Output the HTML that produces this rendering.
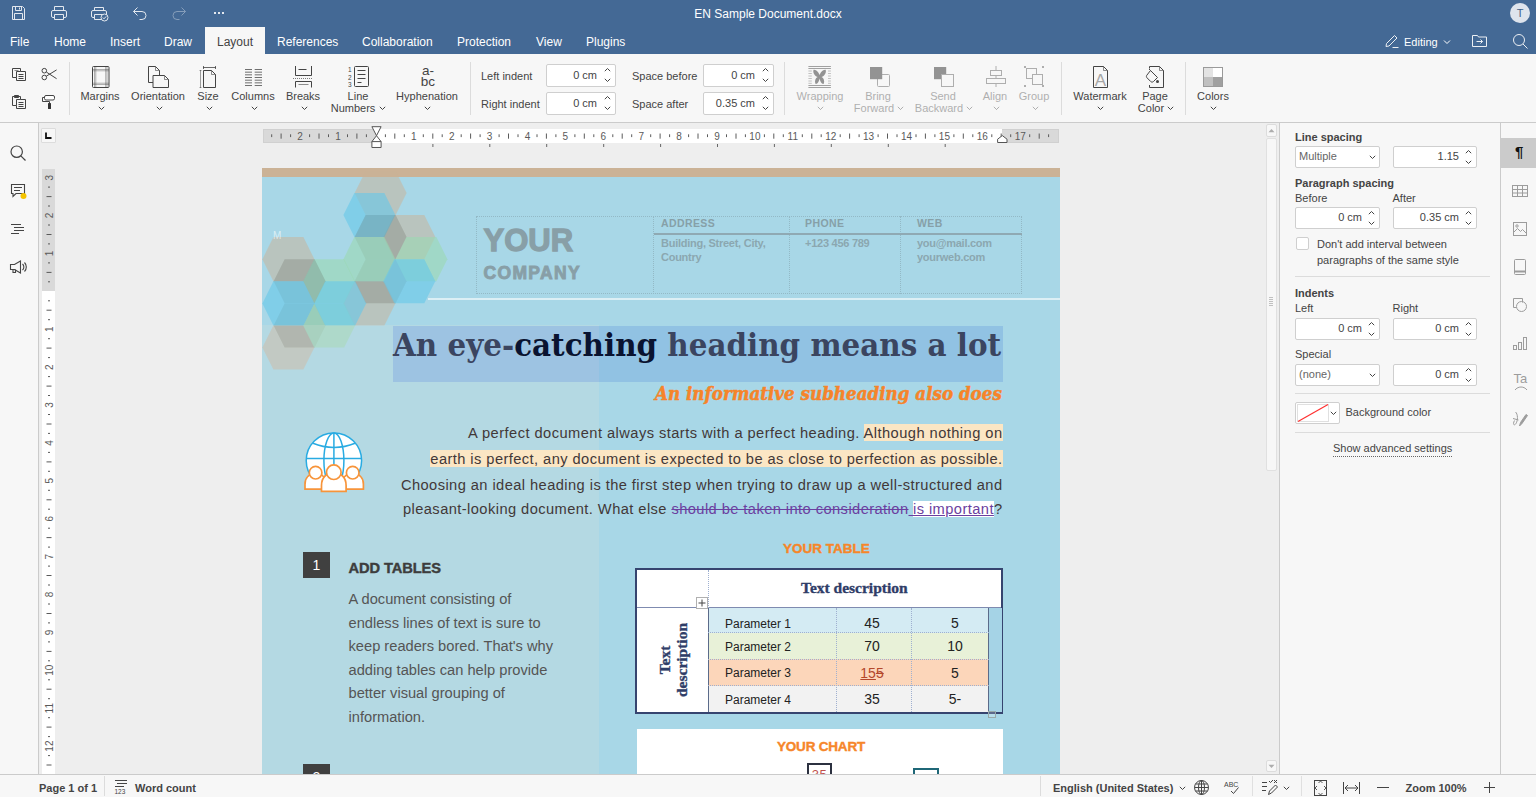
<!DOCTYPE html>
<html lang="en">
<head>
<meta charset="utf-8">
<title>EN Sample Document.docx</title>
<style>
*{box-sizing:border-box;margin:0;padding:0}
html,body{width:1536px;height:797px;overflow:hidden;background:#eee}
body{position:relative;font-family:"Liberation Sans",Arial,sans-serif;font-size:11px;color:#444}
.abs{position:absolute}
svg{position:absolute;overflow:visible}
.t{position:absolute;white-space:nowrap;line-height:1}
/* header */
#hdr{position:absolute;left:0;top:0;width:1536px;height:54.600px;background:#446995}
#hdr .tab{position:absolute;top:35px;color:#fff;font-size:12px;line-height:14px;white-space:nowrap}
#tabact{position:absolute;left:205px;top:27px;width:60px;height:28px;background:#f7f7f7}
/* toolbar */
#tb{position:absolute;left:0;top:54px;width:1536px;height:69px;background:#f7f7f7;border-bottom:1px solid #cbcbcb}
.lbl{position:absolute;font-size:11px;line-height:12px;text-align:center;white-space:nowrap;color:#444;transform:translateX(-50%)}
.dis{opacity:.4}
.sep{position:absolute;width:1px;background:#dcdcdc;top:66px;height:54px}
.inp{position:absolute;height:22px;background:#fff;border:1px solid #cfcfcf;border-radius:2px;font-size:11px;line-height:20px;color:#444;text-align:right}
/* panels */
#left{position:absolute;left:0;top:123px;width:39px;height:651px;background:#f7f7f7;border-right:1px solid #cbcbcb}
#doc{position:absolute;left:39px;top:123px;width:1226px;height:651px;background:#eee;overflow:hidden}
#vsb{position:absolute;left:1265px;top:123px;width:14px;height:651px;background:#eee}
#rp{position:absolute;left:1279px;top:123px;width:221px;height:651px;background:#f7f7f7;border-left:1px solid #cbcbcb}
#rt{position:absolute;left:1500px;top:123px;width:36px;height:651px;background:#f7f7f7;border-left:1px solid #cbcbcb}
#sb{position:absolute;left:0;top:774px;width:1536px;height:23px;background:#f7f7f7;border-top:1px solid #cbcbcb}
#page{position:absolute;left:262px;top:168px;width:798px;height:700px;background:#a8d7e7}

#doc .in{position:absolute;left:-39px;top:-123px;width:1536px;height:797px}
.pt{position:absolute;white-space:nowrap;line-height:1}
.arial{font-family:"Liberation Sans",Arial,sans-serif}
.serif{font-family:"Liberation Serif","DejaVu Serif",serif}
.body1{position:absolute;white-space:nowrap;font-size:14.67px;line-height:17px;color:#423838;text-align:right;letter-spacing:.43px}
.body2{position:absolute;white-space:nowrap;font-size:14.67px;line-height:17px;color:#555}
.hl{background:#fbe6c4;padding-top:1px}
.cell{position:absolute;font-size:12px;line-height:14px;color:#222;white-space:nowrap}
.num{position:absolute;font-size:14px;line-height:16px;color:#222;white-space:nowrap;text-align:center;width:40px}
</style>
</head>
<body>
<!--HEADER-->
<div id="hdr">
<div id="tabact"></div>
<!-- save -->
<svg style="left:8px;top:3px" width="20" height="20" viewBox="0 0 20 20" fill="none" stroke="#fff" stroke-width="1" opacity=".85"><path d="M4.5 3.5h10l2 2v11h-12z"/><path d="M7.5 3.5v4h6v-4"/><path d="M11.5 4.5v2"/><path d="M6.5 16.500v-6h8v6"/></svg>
<!-- print -->
<svg style="left:49px;top:3px" width="20" height="20" viewBox="0 0 20 20" fill="none" stroke="#fff" stroke-width="1" opacity=".85"><path d="M5.500 7.500v-4h9v4"/><rect x="2.500" y="7.500" width="15" height="7" rx="1.500"/><path d="M5.500 11.500h9v5h-9z" fill="#446995"/></svg>
<!-- quick print -->
<svg style="left:89px;top:3px" width="22" height="20" viewBox="0 0 22 20" fill="none" stroke="#fff" stroke-width="1" opacity=".85"><path d="M5.500 7.500v-3h9v3"/><rect x="2.500" y="7.500" width="15" height="7" rx="1.500"/><path d="M5.500 11.500h9v5h-9z" fill="#446995"/><circle cx="15.500" cy="14.500" r="3.500" fill="#446995"/><path d="M13.800 14.500l1.200 1.300 2.200-2.400"/></svg>
<!-- undo -->
<svg style="left:130px;top:4px" width="20" height="20" viewBox="0 0 20 20" fill="none" stroke="#fff" stroke-width="1" opacity=".85"><path d="M7.500 3.500l-4 4 4 4"/><path d="M3.500 7.500h8.500a4 4 0 0 1 0 8h-2.500"/></svg>
<!-- redo -->
<svg style="left:169px;top:4px" width="20" height="20" viewBox="0 0 20 20" fill="none" stroke="#fff" stroke-width="1" opacity=".35"><path d="M12.500 3.500l4 4-4 4"/><path d="M16.500 7.500h-8.500a4 4 0 0 0 0 8h2.500"/></svg>
<!-- more -->
<svg style="left:213px;top:11px" width="12" height="4" viewBox="0 0 12 4" fill="#fff" opacity=".85"><rect x="1" y="1" width="2" height="2"/><rect x="5" y="1" width="2" height="2"/><rect x="9" y="1" width="2" height="2"/></svg>
<div class="t" style="left:0;width:1536px;text-align:center;top:8px;font-size:12px;color:#fff">EN Sample Document.docx</div>
<div class="abs" style="left:1510px;top:3px;width:20px;height:20px;border-radius:10px;background:#dee4ed;color:#3d5f89;font-size:11px;font-weight:normal;text-align:center;line-height:20px">T</div>
<div class="tab" style="left:10px">File</div>
<div class="tab" style="left:54px">Home</div>
<div class="tab" style="left:110px">Insert</div>
<div class="tab" style="left:164px">Draw</div>
<div class="tab" style="left:217px;color:#444">Layout</div>
<div class="tab" style="left:277px">References</div>
<div class="tab" style="left:362px">Collaboration</div>
<div class="tab" style="left:457px">Protection</div>
<div class="tab" style="left:536px">View</div>
<div class="tab" style="left:586px">Plugins</div>
<!-- editing -->
<svg style="left:1383px;top:32px" width="18" height="18" viewBox="0 0 18 18" fill="none" stroke="#fff" stroke-width="1" opacity=".9"><path d="M3.500 11.500l8-8 2.500 2.500-8 8-3 .5z"/><path d="M9.500 15.500h6"/></svg>
<div class="tab" style="left:1404px;font-size:11px">Editing</div>
<svg style="left:1443px;top:39px" width="8" height="6" viewBox="0 0 8 6" fill="none" stroke="#fff" stroke-width="1"><path d="M1 1.500l3 3 3-3"/></svg>
<svg style="left:1471px;top:32px" width="18" height="18" viewBox="0 0 18 18" fill="none" stroke="#fff" stroke-width="1" opacity=".9"><path d="M1.500 3.500h5l1 1.500h8v9.500h-14z"/><path d="M5.500 9.500h6M9.500 7.500l2 2-2 2"/></svg>
<svg style="left:1511px;top:32px" width="18" height="18" viewBox="0 0 18 18" fill="none" stroke="#fff" stroke-width="1" opacity=".9"><circle cx="8" cy="8" r="5.500"/><path d="M12 12l4.500 4.500"/></svg>
</div>
<!--TOOLBAR-->
<div id="tb"></div>
<div id="tbc">
<!-- copy -->
<svg style="left:9px;top:64px" width="20" height="20" viewBox="0 0 20 20" fill="none" stroke="#444" stroke-width="1"><path d="M3.500 4.500h8v3h5v9h-9v-3h-4z" fill="#f7f7f7"/><path d="M7.500 13.500v-6h4"/><path d="M9.500 10.500h5M9.500 12.500h5M9.500 14.500h5"/><path d="M5.500 6.500h4" opacity=".6"/></svg>
<!-- cut -->
<svg style="left:39px;top:64px" width="20" height="20" viewBox="0 0 20 20" fill="none" stroke="#444" stroke-width="1"><circle cx="5.300" cy="6.700" r="2.300"/><circle cx="5.300" cy="13.500" r="2.300"/><path d="M7.300 8l10.300 6.700M7.300 12.200l10.300-6.300"/></svg>
<!-- paste -->
<svg style="left:9px;top:92px" width="20" height="20" viewBox="0 0 20 20" fill="none" stroke="#444" stroke-width="1"><path d="M3.500 4.500h8v3h5v9h-9v-3h-4z" fill="#f7f7f7"/><path d="M7.500 13.500v-6h4"/><path d="M9.500 10.500h5M9.500 12.500h5M9.500 14.500h5"/><path d="M5.500 3.500h4v2h-4z" fill="#444"/></svg>
<!-- format painter -->
<svg style="left:39px;top:92px" width="20" height="20" viewBox="0 0 20 20" fill="none" stroke="#444" stroke-width="1"><rect x="5.500" y="3.500" width="10" height="4.500" rx="1.500" fill="#fff"/><path d="M5.500 5.500h-2v4h7v2"/><rect x="9" y="11" width="3" height="6" rx=".5" fill="#333" stroke="none"/></svg>
<div class="sep" style="left:69px;top:62px;height:53px"></div>
<!-- margins -->
<svg style="left:90px;top:64px" width="22" height="26" viewBox="0 0 22 26" fill="none" stroke="#444" stroke-width="1"><rect x="2.500" y="2.500" width="16.500" height="21" rx="1"/><path d="M4.500 2.500v21M17 2.500v21M2.500 5.500h16.500M2.500 20.500h16.500M5.800 2.500v21M15.700 2.500v21M2.500 6.800h16.500M2.500 19.200h16.500" opacity=".4"/></svg>
<div class="lbl" style="left:100px;top:90px">Margins</div>
<svg style="left:97.5px;top:106px" width="7" height="5" viewBox="0 0 7 5" fill="none" stroke="#444" stroke-width="1" ><path d="M.8 .8l2.700 2.700 2.700-2.700"/></svg>
<!-- orientation -->
<svg style="left:146px;top:64px" width="26" height="26" viewBox="0 0 26 26" fill="none" stroke="#444" stroke-width="1"><path d="M2.500 2.500h7l4 4v12h-11z"/><path d="M9.500 2.500v4h4" opacity=".6"/><path d="M7 11.500h11.500l4 4v8h-15.500z" fill="#f7f7f7"/><path d="M18.500 11.500v4h4" opacity=".6"/></svg>
<div class="lbl" style="left:158px;top:90px">Orientation</div>
<svg style="left:155.5px;top:106px" width="7" height="5" viewBox="0 0 7 5" fill="none" stroke="#444" stroke-width="1" ><path d="M.8 .8l2.700 2.700 2.700-2.700"/></svg>
<!-- size -->
<svg style="left:197px;top:64px" width="22" height="26" viewBox="0 0 22 26" fill="none" stroke="#444" stroke-width="1"><path d="M6.500 6.500h8l4 4v13h-12z"/><path d="M14.500 6.500v4h4" opacity=".6"/><path d="M6 3.500h13M6.500 2v3M18.500 2v3" opacity=".8"/><path d="M3.500 6v18M2.500 6.500h2M2.500 23.500h2" opacity=".5"/></svg>
<div class="lbl" style="left:208px;top:90px">Size</div>
<svg style="left:205.5px;top:106px" width="7" height="5" viewBox="0 0 7 5" fill="none" stroke="#444" stroke-width="1" ><path d="M.8 .8l2.700 2.700 2.700-2.700"/></svg>
<!-- columns -->
<svg style="left:243px;top:66px" width="22" height="22" viewBox="0 0 22 22" fill="none" stroke="#444" stroke-width="1"><path d="M2 3.50h7M11.700 3.50h7.300M2 6.17h7M11.700 6.17h7.300M2 8.84h7M11.700 8.84h7.300M2 11.51h7M11.700 11.51h7.300M2 14.18h7M11.700 14.18h7.300M2 16.85h7M11.700 16.85h7.300M2 19.52h7M11.700 19.52h7.300" stroke-width=".9" opacity=".85"/></svg>
<div class="lbl" style="left:253px;top:90px">Columns</div>
<svg style="left:250.5px;top:106px" width="7" height="5" viewBox="0 0 7 5" fill="none" stroke="#444" stroke-width="1" ><path d="M.8 .8l2.700 2.700 2.700-2.700"/></svg>
<!-- breaks -->
<svg style="left:291px;top:64px" width="24" height="26" viewBox="0 0 24 26" fill="none" stroke="#444" stroke-width="1"><path d="M4.500 2v9.500h16v-9.500"/><path d="M7.500 5.500h8"/><path d="M2 14.500h20" stroke-dasharray="1 1" opacity=".7"/><path d="M4.500 23.500v-6h16v6"/><path d="M7.500 20.500h10" opacity=".6"/></svg>
<div class="lbl" style="left:303px;top:90px">Breaks</div>
<svg style="left:300.5px;top:106px" width="7" height="5" viewBox="0 0 7 5" fill="none" stroke="#444" stroke-width="1" ><path d="M.8 .8l2.700 2.700 2.700-2.700"/></svg>
<!-- line numbers -->
<svg style="left:345px;top:64px" width="26" height="26" viewBox="0 0 26 26" fill="none" stroke="#444" stroke-width="1"><rect x="9.500" y="2.500" width="14" height="20" rx="1"/><path d="M12.500 6.500h8M12.500 10.500h8M12.500 14.500h8M12.500 18.500h4"/><text x="3" y="8" font-size="6.500" font-family="Liberation Sans,sans-serif" fill="#444" stroke="none">1</text><text x="3" y="15.500" font-size="6.500" font-family="Liberation Sans,sans-serif" fill="#444" stroke="none">2</text><text x="3" y="23" font-size="6.500" font-family="Liberation Sans,sans-serif" fill="#444" stroke="none">3</text></svg>
<div class="lbl" style="left:358px;top:90px">Line</div>
<div class="lbl" style="left:353px;top:102px">Numbers</div>
<svg style="left:378.5px;top:106.0px" width="7" height="5" viewBox="0 0 7 5" fill="none" stroke="#444" stroke-width="1" ><path d="M.8 .8l2.700 2.700 2.700-2.700"/></svg>
<!-- hyphenation -->
<div class="t" style="left:414px;top:65px;width:28px;text-align:center;font-family:'Liberation Sans',sans-serif;font-size:13.500px;line-height:11px;color:#444;white-space:normal">a-<br>bc</div>
<div class="lbl" style="left:427px;top:90px">Hyphenation</div>
<svg style="left:424px;top:106px" width="7" height="5" viewBox="0 0 7 5" fill="none" stroke="#444" stroke-width="1" ><path d="M.8 .8l2.700 2.700 2.700-2.700"/></svg>
<div class="sep" style="left:470px;top:62px;height:53px"></div>
<div class="t" style="left:481px;top:70.500px;font-size:11px">Left indent</div>
<div class="t" style="left:481px;top:98.500px;font-size:11px">Right indent</div>
<div class="inp" style="left:546px;top:64px;width:70px;height:23px"><span class="t" style="right:18px;top:5px">0 cm</span></div>
<div class="inp" style="left:546px;top:92px;width:70px;height:23px"><span class="t" style="right:18px;top:5px">0 cm</span></div>
<svg style="left:603.5px;top:66.5px" width="7" height="5" viewBox="0 0 7 5" fill="none" stroke="#444" stroke-width="1"><path d="M.8 4.200l2.700-2.700 2.700 2.700"/></svg><svg style="left:603.5px;top:78.0px" width="7" height="5" viewBox="0 0 7 5" fill="none" stroke="#444" stroke-width="1"><path d="M.8 .8l2.700 2.700 2.700-2.700"/></svg><svg style="left:603.5px;top:94.5px" width="7" height="5" viewBox="0 0 7 5" fill="none" stroke="#444" stroke-width="1"><path d="M.8 4.200l2.700-2.700 2.700 2.700"/></svg><svg style="left:603.5px;top:106.0px" width="7" height="5" viewBox="0 0 7 5" fill="none" stroke="#444" stroke-width="1"><path d="M.8 .8l2.700 2.700 2.700-2.700"/></svg>
<div class="t" style="left:632px;top:70.500px;font-size:11px">Space before</div>
<div class="t" style="left:632px;top:98.500px;font-size:11px">Space after</div>
<div class="inp" style="left:703px;top:64px;width:71px;height:23px"><span class="t" style="right:18px;top:5px">0 cm</span></div>
<div class="inp" style="left:703px;top:92px;width:71px;height:23px"><span class="t" style="right:18px;top:5px">0.35 cm</span></div>
<svg style="left:761.5px;top:66.5px" width="7" height="5" viewBox="0 0 7 5" fill="none" stroke="#444" stroke-width="1"><path d="M.8 4.200l2.700-2.700 2.700 2.700"/></svg><svg style="left:761.5px;top:78.0px" width="7" height="5" viewBox="0 0 7 5" fill="none" stroke="#444" stroke-width="1"><path d="M.8 .8l2.700 2.700 2.700-2.700"/></svg><svg style="left:761.5px;top:94.5px" width="7" height="5" viewBox="0 0 7 5" fill="none" stroke="#444" stroke-width="1"><path d="M.8 4.200l2.700-2.700 2.700 2.700"/></svg><svg style="left:761.5px;top:106.0px" width="7" height="5" viewBox="0 0 7 5" fill="none" stroke="#444" stroke-width="1"><path d="M.8 .8l2.700 2.700 2.700-2.700"/></svg>
<div class="sep" style="left:784px;top:62px;height:53px"></div>
<!-- wrapping -->
<svg class="dis" style="left:807px;top:64px" width="26" height="26" viewBox="0 0 26 26" fill="none" stroke="#444" stroke-width="1"><path d="M1.400 2.500h22.500M1.400 4.500h22.500M1.400 21.500h22.500M1.400 23.500h22.500" stroke="#222"/><path d="M1.400 7h3.400M1.400 9.500h3.400M1.400 12h3.400M1.400 14.500h3.400M1.400 17h3.400M1.400 19.300h3.400M21 7h2.900M21 9.500h2.900M21 12h2.900M21 14.500h2.900M21 17h2.900M21 19.300h2.900" opacity=".75"/><path d="M12.600 11C11.800 8.500 9 5.200 6.600 5.800 5.600 8 7.200 12 10.600 13 8.400 14 7.400 17 8.400 19.800 10.200 20.600 12 17.500 12.600 14.500 13.200 17.500 15 20.600 16.800 19.800 17.800 17 16.800 14 14.600 13 18 12 19.600 8 18.600 5.800 16.200 5.200 13.400 8.500 12.600 11z" fill="#000" stroke="none"/></svg>
<div class="lbl dis" style="left:820px;top:90px">Wrapping</div>
<svg style="left:816.5px;top:106.0px" width="7" height="5" viewBox="0 0 7 5" fill="none" stroke="#444" stroke-width="1" class="dis"><path d="M.8 .8l2.700 2.700 2.700-2.700"/></svg>
<!-- bring forward -->
<svg class="dis" style="left:867px;top:64px" width="26" height="26" viewBox="0 0 26 26" fill="none" stroke="#444" stroke-width="1"><rect x="10.500" y="10.500" width="12" height="12" rx="1"/><rect x="3" y="3" width="12.200" height="12.200" fill="#000" stroke="none"/></svg>
<div class="lbl dis" style="left:878px;top:90px">Bring</div>
<div class="lbl dis" style="left:874px;top:102px">Forward</div>
<svg style="left:896.5px;top:106.0px" width="7" height="5" viewBox="0 0 7 5" fill="none" stroke="#444" stroke-width="1" class="dis"><path d="M.8 .8l2.700 2.700 2.700-2.700"/></svg>
<!-- send backward -->
<svg class="dis" style="left:932px;top:64px" width="26" height="26" viewBox="0 0 26 26" fill="none" stroke="#444" stroke-width="1"><rect x="2" y="3" width="12.200" height="12.200" fill="#000" stroke="none"/><rect x="9.500" y="10.500" width="12" height="12" fill="#f7f7f7"/></svg>
<div class="lbl dis" style="left:943px;top:90px">Send</div>
<div class="lbl dis" style="left:939px;top:102px">Backward</div>
<svg style="left:965.5px;top:106.0px" width="7" height="5" viewBox="0 0 7 5" fill="none" stroke="#444" stroke-width="1" class="dis"><path d="M.8 .8l2.700 2.700 2.700-2.700"/></svg>
<!-- align -->
<svg class="dis" style="left:984px;top:64px" width="24" height="26" viewBox="0 0 24 26" fill="none" stroke="#444" stroke-width="1"><path d="M12 2v21"/><rect x="6.500" y="6.500" width="11" height="5" fill="#f7f7f7"/><rect x="2.500" y="14.500" width="19" height="5" fill="#f7f7f7"/></svg>
<div class="lbl dis" style="left:995px;top:90px">Align</div>
<svg style="left:992.5px;top:106.0px" width="7" height="5" viewBox="0 0 7 5" fill="none" stroke="#444" stroke-width="1" class="dis"><path d="M.8 .8l2.700 2.700 2.700-2.700"/></svg>
<!-- group -->
<svg class="dis" style="left:1022px;top:64px" width="24" height="26" viewBox="0 0 24 26" fill="none" stroke="#444" stroke-width="1"><rect x="4.500" y="4.500" width="10" height="10"/><rect x="10.500" y="10.500" width="10" height="10" fill="#f7f7f7"/><path d="M2 2h2v2h-2zM20 2h2v2h-2zM2 21h2v2h-2zM20 21h2v2h-2z" fill="#444" stroke="none"/></svg>
<div class="lbl dis" style="left:1034px;top:90px">Group</div>
<svg style="left:1031.5px;top:106.0px" width="7" height="5" viewBox="0 0 7 5" fill="none" stroke="#444" stroke-width="1" class="dis"><path d="M.8 .8l2.700 2.700 2.700-2.700"/></svg>
<div class="sep" style="left:1061px;top:62px;height:53px"></div>
<!-- watermark -->
<svg style="left:1090px;top:64px" width="22" height="26" viewBox="0 0 22 26" fill="none" stroke="#444" stroke-width="1"><path d="M3.500 2.500h10l4 4v17h-14z"/><path d="M13.500 2.500v4h4" opacity=".6"/><text x="10.500" y="21.500" font-size="17" text-anchor="middle" font-family="Liberation Sans,sans-serif" fill="#444" stroke="none" opacity=".45">A</text></svg>
<div class="lbl" style="left:1100px;top:90px">Watermark</div>
<svg style="left:1097px;top:106px" width="7" height="5" viewBox="0 0 7 5" fill="none" stroke="#444" stroke-width="1" ><path d="M.8 .8l2.700 2.700 2.700-2.700"/></svg>
<!-- page color -->
<svg style="left:1143px;top:64px" width="24" height="26" viewBox="0 0 24 26" fill="none" stroke="#444" stroke-width="1"><path d="M6.500 4.500v-2h10l4 4v17h-14v-2.500"/><path d="M16.500 2.500v4h4" opacity=".6"/><path d="M7.500 6.500l7 7-4 4c-.8.800-2 .8-2.800 0l-3.700-3.700c-.8-.8-.8-2 0-2.800z" fill="#f7f7f7"/><path d="M7.500 6.500l-1.500-1.500"/><circle cx="14.500" cy="17.500" r="1.500" fill="#444" stroke="none"/></svg>
<div class="lbl" style="left:1155px;top:90px">Page</div>
<div class="lbl" style="left:1151px;top:102px">Color</div>
<svg style="left:1166.5px;top:106.0px" width="7" height="5" viewBox="0 0 7 5" fill="none" stroke="#444" stroke-width="1" ><path d="M.8 .8l2.700 2.700 2.700-2.700"/></svg>
<div class="sep" style="left:1185px;top:62px;height:53px"></div>
<!-- colors -->
<svg style="left:1203px;top:67px" width="21" height="21" viewBox="0 0 21 21"><rect x="0" y="0" width="20" height="20" fill="#fff"/><rect x="1" y="1" width="9" height="9" fill="#e3e3e3"/><rect x="10" y="1" width="9" height="9" fill="#fff"/><rect x="1" y="10" width="9" height="9" fill="#c0c0c0"/><rect x="10" y="10" width="9" height="9" fill="#a0a0a0"/><rect x=".5" y=".5" width="19" height="19" fill="none" stroke="#9a9a9a"/></svg>
<div class="lbl" style="left:1213px;top:90px">Colors</div>
<svg style="left:1210px;top:106px" width="7" height="5" viewBox="0 0 7 5" fill="none" stroke="#444" stroke-width="1" ><path d="M.8 .8l2.700 2.700 2.700-2.700"/></svg>
</div>
<!--LEFT-->
<div id="left"></div>
<svg style="left:8px;top:143px" width="20" height="20" viewBox="0 0 20 20" fill="none" stroke="#444" stroke-width="1.200"><circle cx="8.700" cy="8.700" r="5.700"/><path d="M12.800 12.800l4.700 4.700"/></svg>
<svg style="left:8px;top:181px" width="22" height="22" viewBox="0 0 22 22" fill="none" stroke="#444" stroke-width="1.100"><path d="M3.500 3.500h13v9h-8.500l-3 3v-3h-1.500z"/><path d="M6 6.500h8M6 9.500h6"/><circle cx="15.500" cy="15" r="3" fill="#f5c400" stroke="none"/></svg>
<svg style="left:8px;top:219px" width="20" height="20" viewBox="0 0 20 20" fill="none" stroke="#444" stroke-width="1.100"><path d="M3 5.500h10M6 8.500h10M6 11.500h10M3 14.500h8"/></svg>
<svg style="left:7px;top:256px" width="22" height="22" viewBox="0 0 22 22" fill="none" stroke="#444" stroke-width="1.100"><path d="M3.500 8.500h4l6-3.500v12l-6-3.500h-4z"/><path d="M6 13.500v3h2.500v-3"/><path d="M15.500 8a4 4 0 0 1 0 6M17.500 6.500a6.500 6.500 0 0 1 0 9"/></svg>
<!--DOC-->
<div id="doc"><div class="in">
<!--RULERS-->
<div class="abs" style="left:40.500px;top:128px;width:15px;height:15px;background:#f7f7f7;border:1px solid #dcdcdc;border-radius:1px"></div>
<svg style="left:40.500px;top:128px" width="15" height="15" viewBox="0 0 15 15"><path d="M5 4.500v5.500h5.500" fill="none" stroke="#111" stroke-width="1.800"/></svg>
<div class="abs" style="left:262.500px;top:129px;width:796.500px;height:14px;background:#d9d9d9;border:1px solid #d0d0d0"></div>
<div class="abs" style="left:375.9px;top:129px;width:626.4px;height:14px;background:#fff"></div>
<div class="abs" style="left:42px;top:168.500px;width:13px;height:610px;background:#d9d9d9"></div>
<div class="abs" style="left:42px;top:291.3px;width:13px;height:500px;background:#fff"></div>
<svg style="left:0;top:0" width="1536" height="797" viewBox="0 0 1536 797" font-family="Liberation Sans,Arial,sans-serif" font-size="10" fill="#5a5a5a" stroke="none"><text x="300.1" y="139.500" text-anchor="middle">2</text><text x="338.0" y="139.500" text-anchor="middle">1</text><text x="413.8" y="139.500" text-anchor="middle">1</text><text x="451.7" y="139.500" text-anchor="middle">2</text><text x="489.6" y="139.500" text-anchor="middle">3</text><text x="527.5" y="139.500" text-anchor="middle">4</text><text x="565.4" y="139.500" text-anchor="middle">5</text><text x="603.3" y="139.500" text-anchor="middle">6</text><text x="641.2" y="139.500" text-anchor="middle">7</text><text x="679.1" y="139.500" text-anchor="middle">8</text><text x="717.0" y="139.500" text-anchor="middle">9</text><text x="754.9" y="139.500" text-anchor="middle">10</text><text x="792.8" y="139.500" text-anchor="middle">11</text><text x="830.7" y="139.500" text-anchor="middle">12</text><text x="868.6" y="139.500" text-anchor="middle">13</text><text x="906.5" y="139.500" text-anchor="middle">14</text><text x="944.4" y="139.500" text-anchor="middle">15</text><text x="982.3" y="139.500" text-anchor="middle">16</text><text x="1020.2" y="139.500" text-anchor="middle">17</text><path d="M271.7 134.300v2.800M281.1 133.500v5.2M290.6 134.300v2.800M309.6 134.300v2.800M319.0 133.500v5.2M328.5 134.300v2.800M347.5 134.300v2.800M356.9 133.500v5.2M366.4 134.300v2.800M385.4 134.300v2.800M394.8 133.500v5.2M404.3 134.300v2.800M423.3 134.300v2.800M432.8 133.500v5.2M442.2 134.300v2.800M461.2 134.300v2.800M470.6 133.500v5.2M480.1 134.300v2.800M499.1 134.300v2.800M508.5 133.500v5.2M518.0 134.300v2.800M537.0 134.300v2.800M546.4 133.500v5.2M555.9 134.300v2.800M574.9 134.300v2.800M584.3 133.500v5.2M593.8 134.300v2.800M612.8 134.300v2.800M622.2 133.500v5.2M631.7 134.300v2.800M650.7 134.300v2.800M660.1 133.500v5.2M669.6 134.300v2.800M688.6 134.300v2.800M698.0 133.500v5.2M707.5 134.300v2.800M726.5 134.300v2.800M736.0 133.500v5.2M745.4 134.300v2.800M764.4 134.300v2.800M773.8 133.500v5.2M783.3 134.300v2.800M802.3 134.300v2.800M811.8 133.500v5.2M821.2 134.300v2.800M840.2 134.300v2.800M849.6 133.500v5.2M859.1 134.300v2.800M878.1 134.300v2.800M887.5 133.500v5.2M897.0 134.300v2.800M916.0 134.300v2.800M925.4 133.500v5.2M934.9 134.300v2.800M953.9 134.300v2.800M963.3 133.500v5.2M972.8 134.300v2.800M991.8 134.300v2.800M1001.2 133.500v5.2M1010.7 134.300v2.800M1029.7 134.300v2.800M1039.2 133.500v5.2M1048.6 134.300v2.800" stroke="#5a5a5a" stroke-width="1" fill="none"/><path d="M432.9 144v3M489.8 144v3M546.7 144v3M603.7 144v3M660.6 144v3M717.5 144v3M774.4 144v3M831.3 144v3M888.3 144v3M945.2 144v3" stroke="#666" stroke-width="1" fill="none"/><text transform="translate(52.500 177.6) rotate(-90)" text-anchor="middle">3</text><text transform="translate(52.500 215.5) rotate(-90)" text-anchor="middle">2</text><text transform="translate(52.500 253.4) rotate(-90)" text-anchor="middle">1</text><text transform="translate(52.500 329.2) rotate(-90)" text-anchor="middle">1</text><text transform="translate(52.500 367.1) rotate(-90)" text-anchor="middle">2</text><text transform="translate(52.500 405.0) rotate(-90)" text-anchor="middle">3</text><text transform="translate(52.500 442.9) rotate(-90)" text-anchor="middle">4</text><text transform="translate(52.500 480.8) rotate(-90)" text-anchor="middle">5</text><text transform="translate(52.500 518.7) rotate(-90)" text-anchor="middle">6</text><text transform="translate(52.500 556.6) rotate(-90)" text-anchor="middle">7</text><text transform="translate(52.500 594.5) rotate(-90)" text-anchor="middle">8</text><text transform="translate(52.500 632.4) rotate(-90)" text-anchor="middle">9</text><text transform="translate(52.500 670.3) rotate(-90)" text-anchor="middle">10</text><text transform="translate(52.500 708.2) rotate(-90)" text-anchor="middle">11</text><text transform="translate(52.500 746.1) rotate(-90)" text-anchor="middle">12</text><path d="M48 187.1h2M46.500 196.6h5M48 206.0h2M48 225.0h2M46.500 234.5h5M48 243.9h2M48 262.9h2M46.500 272.4h5M48 281.8h2M48 300.8h2M46.500 310.2h5M48 319.7h2M48 338.7h2M46.500 348.1h5M48 357.6h2M48 376.6h2M46.500 386.1h5M48 395.5h2M48 414.5h2M46.500 424.0h5M48 433.4h2M48 452.4h2M46.500 461.9h5M48 471.3h2M48 490.3h2M46.500 499.8h5M48 509.2h2M48 528.2h2M46.500 537.6h5M48 547.1h2M48 566.1h2M46.500 575.5h5M48 585.0h2M48 604.0h2M46.500 613.5h5M48 622.9h2M48 641.9h2M46.500 651.4h5M48 660.8h2M48 679.8h2M46.500 689.2h5M48 698.7h2M48 717.7h2M46.500 727.1h5M48 736.6h2M48 755.6h2M46.500 765.0h5M48 774.5h2" stroke="#5a5a5a" stroke-width="1" fill="none"/><path d="M371.900 126.700h9.200l-4.600 9 4.600 5.900v5.900h-9.200v-5.900l4.600-5.900zM371.900 141.600h9.200" fill="#fff" stroke="#555" stroke-width="1" stroke-linejoin="round"/><path d="M1002.300 135.600l4.700 3.600v3.300h-9.400v-3.300z" fill="#fff" stroke="#555" stroke-width="1" stroke-linejoin="round"/></svg>
<!--/RULERS-->
<!--PAGE-->
<div id="page"></div>
<div class="abs" style="left:262px;top:168px;width:798px;height:9px;background:#cbb296"></div>
<svg style="left:262px;top:177px" width="200" height="200" viewBox="262 177 200 200"><polygon points="354.6,193.0 365.6,170.9 395.6,170.9 406.6,193.0 395.6,215.1 365.6,215.1" fill="rgba(201,177,149,.5)"/><polygon points="383.3,237.1 394.3,215.1 424.3,215.1 435.3,237.1 424.3,259.2 394.3,259.2" fill="rgba(201,177,149,.5)"/><polygon points="262.4,259.2 273.4,237.1 303.4,237.1 314.4,259.2 303.4,281.3 273.4,281.3" fill="rgba(201,177,149,.5)"/><polygon points="343.4,303.4 354.4,281.3 384.4,281.3 395.4,303.4 384.4,325.4 354.4,325.4" fill="rgba(201,177,149,.5)"/><polygon points="262.4,347.5 273.4,325.4 303.4,325.4 314.4,347.5 303.4,369.6 273.4,369.6" fill="rgba(201,177,149,.5)"/><polygon points="343.4,215.1 354.4,193.0 384.4,193.0 395.4,215.1 384.4,237.1 354.4,237.1" fill="rgba(101,200,233,.6)"/><polygon points="303.2,281.3 314.2,259.2 344.2,259.2 355.2,281.3 344.2,303.3 314.2,303.3" fill="rgba(155,217,179,.6)"/><polygon points="354.6,237.1 365.6,215.1 395.6,215.1 406.6,237.1 395.6,259.2 365.6,259.2" fill="rgba(95,95,80,.23)"/><polygon points="273.6,281.3 284.6,259.2 314.6,259.2 325.6,281.3 314.6,303.3 284.6,303.3" fill="rgba(95,95,80,.23)"/><polygon points="273.6,325.4 284.6,303.4 314.6,303.4 325.6,325.4 314.6,347.5 284.6,347.5" fill="rgba(95,95,80,.23)"/><polygon points="354.6,281.3 365.6,259.2 395.6,259.2 406.6,281.3 395.6,303.3 365.6,303.3" fill="rgba(95,95,80,.23)"/><polygon points="343.4,259.2 354.4,237.1 384.4,237.1 395.4,259.2 384.4,281.3 354.4,281.3" fill="rgba(155,217,179,.6)"/><polygon points="395.4,259.2 406.4,237.1 436.4,237.1 447.4,259.2 436.4,281.3 406.4,281.3" fill="rgba(155,217,179,.6)"/><polygon points="303.2,325.4 314.2,303.4 344.2,303.4 355.2,325.4 344.2,347.5 314.2,347.5" fill="rgba(155,217,179,.6)"/><polygon points="383.3,281.3 394.3,259.2 424.3,259.2 435.3,281.3 424.3,303.3 394.3,303.3" fill="rgba(101,200,233,.6)"/><polygon points="262.4,303.4 273.4,281.3 303.4,281.3 314.4,303.4 303.4,325.4 273.4,325.4" fill="rgba(101,200,233,.6)"/><polygon points="314.2,303.4 325.2,281.3 355.2,281.3 366.2,303.4 355.2,325.4 325.2,325.4" fill="rgba(101,200,233,.6)"/></svg>
<div class="pt arial" style="left:273px;top:230.500px;font-size:10px;color:rgba(255,255,255,.6)">M</div>
<div class="abs" style="left:262px;top:325px;width:337px;height:460px;background:rgba(228,225,216,.2)"></div>

<!-- company table -->
<div class="abs" style="left:476px;top:216px;width:546px;height:78px;border:1px dotted #93b9c6"></div>
<div class="abs" style="left:653px;top:216px;width:1px;height:78px;border-left:1px dotted #93b9c6"></div>
<div class="abs" style="left:789px;top:216px;width:1px;height:78px;border-left:1px dotted #93b9c6"></div>
<div class="abs" style="left:900px;top:216px;width:1px;height:78px;border-left:1px dotted #93b9c6"></div>
<div class="abs" style="left:654px;top:233px;width:368px;height:2px;background:#8fa9b3"></div>
<div class="pt arial" id="your" style="left:483.500px;top:224.500px;font-size:31px;font-weight:bold;color:#889fa7;-webkit-text-stroke:1.300px #889fa7">YOUR</div>
<div class="pt arial" id="company" style="left:483.500px;top:265.300px;font-size:17.500px;font-weight:bold;color:#889fa7;letter-spacing:1.330px;-webkit-text-stroke:.9px #889fa7">COMPANY</div>
<div class="pt arial" id="addr" style="left:661px;top:218px;font-size:10.500px;font-weight:bold;color:#86a0a8;letter-spacing:.4px">ADDRESS</div>
<div class="pt arial" id="phone" style="left:805px;top:218px;font-size:10.500px;font-weight:bold;color:#86a0a8;letter-spacing:.4px">PHONE</div>
<div class="pt arial" id="web" style="left:917px;top:218px;font-size:10.500px;font-weight:bold;color:#86a0a8;letter-spacing:.4px">WEB</div>
<div class="pt arial" id="addr1" style="left:661px;top:238.300px;font-size:11px;letter-spacing:-.260px;font-weight:bold;color:#8ba7b0">Building, Street, City,</div>
<div class="pt arial" id="addr2" style="left:661px;top:252.300px;font-size:11px;letter-spacing:-.260px;font-weight:bold;color:#8ba7b0">Country</div>
<div class="pt arial" id="ph1" style="left:805px;top:238.300px;font-size:11px;letter-spacing:-.260px;font-weight:bold;color:#8ba7b0">+123 456 789</div>
<div class="pt arial" id="web1" style="left:917px;top:238.300px;font-size:11px;letter-spacing:-.260px;font-weight:bold;color:#8ba7b0">you@mail.com</div>
<div class="pt arial" id="web2" style="left:917px;top:252.300px;font-size:11px;letter-spacing:-.260px;font-weight:bold;color:#8ba7b0">yourweb.com</div>
<div class="abs" style="left:428px;top:298px;width:632px;height:2px;background:rgba(255,255,255,.6)"></div>
<!-- heading -->
<div class="abs" style="left:392.600px;top:326px;width:206.400px;height:56px;background:#9dc3e2"></div>
<div class="abs" style="left:599px;top:326px;width:404px;height:56px;background:#91c2e3"></div>
<div class="pt" id="h1" style="font-family:'DejaVu Serif','Liberation Serif',serif;left:393px;top:324.500px;font-size:30.900px;font-weight:bold;color:#3b4560;line-height:40px;transform:scaleX(.952);transform-origin:0 0">An eye-<span style="color:#0a1330">catching</span> heading means a lot</div>
<div class="pt" id="h2" style="font-family:'DejaVu Serif','Liberation Serif',serif;left:655px;top:382px;font-size:18px;font-weight:bold;font-style:italic;color:#f6842a;-webkit-text-stroke:.5px #f6842a;line-height:24px;transform:scaleX(.93);transform-origin:0 0">An informative subheading also does</div>
<!-- globe -->
<svg style="left:300px;top:428px" width="70" height="68" viewBox="300 428 70 68" fill="none"><circle cx="333.900" cy="460.600" r="27.700" fill="#fff" stroke="#29abe2" stroke-width="1.500"/><ellipse cx="333.900" cy="460.600" rx="10" ry="27.700" stroke="#29abe2" stroke-width="1.500"/><path d="M333.900 433v55M306.300 458.600h55.200M313 443.300c13 5.500 29 5.500 42 0" stroke="#29abe2" stroke-width="1.500"/>
<g fill="#fff" stroke="#f7943a" stroke-width="1.700"><path d="M305 489.200v-5c0-7 4.500-10.500 10.600-10.500s10.600 3.500 10.600 10.500v5z"/><circle cx="315.600" cy="472.700" r="6.300"/><path d="M342 489.200v-5c0-7 4.500-10.500 10.700-10.500s10.700 3.500 10.700 10.500v5z"/><circle cx="352.700" cy="472.700" r="6.300"/><path d="M321.500 491.400v-6c0-8 5-12.500 12.300-12.500s12.300 4.500 12.300 12.500v6z"/><circle cx="333.800" cy="472.200" r="7.300"/></g></svg>
<!-- paragraph -->
<div class="body1 arial" id="p1" style="right:533.500px;top:425.300px;letter-spacing:.450px">A perfect document always starts with a perfect heading. <span class="hl">Although nothing on</span></div>
<div class="body1 arial" id="p2" style="right:533.500px;top:450.500px"><span class="hl">earth is perfect, any document is expected to be as close to perfection as possible.</span></div>
<div class="body1 arial" id="p3" style="right:533.500px;top:477px">Choosing an ideal heading is the first step when trying to draw up a well-structured and</div>
<div class="body1 arial" id="p4" style="right:533.500px;top:501px">pleasant-looking document. What else <span style="color:#6b3fa0;text-decoration:line-through">should be taken into consideration</span><span style="color:#6b3fa0;text-decoration:underline"> <span style="background:#fff">is important</span></span>?</div>
<!-- section 1 -->
<div class="abs" style="left:303px;top:552px;width:27px;height:26px;background:#404040;color:#fff;font-size:14px;line-height:26px;text-align:center">1</div>
<div class="pt arial" id="addt" style="left:348.500px;top:561.300px;font-size:14.670px;font-weight:bold;color:#3d3d3d;letter-spacing:-.1px;-webkit-text-stroke:.4px #3d3d3d">ADD TABLES</div>
<div class="body2 arial" id="b1" style="left:348.500px;top:591px">A document consisting of</div>
<div class="body2 arial" id="b2" style="left:348.500px;top:614.500px">endless lines of text is sure to</div>
<div class="body2 arial" id="b3" style="left:348.500px;top:638px">keep readers bored. That's why</div>
<div class="body2 arial" id="b4" style="left:348.500px;top:661.500px">adding tables can help provide</div>
<div class="body2 arial" id="b5" style="left:348.500px;top:685px">better visual grouping of</div>
<div class="body2 arial" id="b6" style="left:348.500px;top:709px">information.</div>
<div class="abs" style="left:303px;top:764px;width:27px;height:26px;background:#404040;color:#fff;font-size:14px;line-height:26px;text-align:center">2</div>
<!-- table -->
<div class="pt arial" id="yt" style="left:783px;top:542.200px;font-size:13.500px;font-weight:bold;color:#f6862a;letter-spacing:0;-webkit-text-stroke:.4px #f6862a">YOUR TABLE</div>
<div class="abs" style="left:635px;top:568px;width:368px;height:146px;background:#fff;border:2px solid #36446f"></div>
<div class="abs" style="left:708px;top:608px;width:281px;height:25px;background:#d4ebf3"></div>
<div class="abs" style="left:708px;top:633px;width:281px;height:26px;background:#e8f1d8"></div>
<div class="abs" style="left:708px;top:659px;width:281px;height:27px;background:#fcd6ba"></div>
<div class="abs" style="left:708px;top:686px;width:281px;height:26px;background:#f2f2f2"></div>
<div class="abs" style="left:988px;top:608px;width:14px;height:104px;background:#a5d3e6;border-left:1px solid #5b6b8a"></div>
<div class="abs" style="left:637px;top:607px;width:364px;height:1px;background:#7f8bb0"></div>
<div class="abs" style="left:708px;top:570px;width:0;height:38px;border-left:1px dotted #9fb0d0"></div>
<div class="abs" style="left:708px;top:608px;width:0;height:104px;border-left:1px solid #5b6b8a"></div>
<div class="abs" style="left:836px;top:608px;width:0;height:104px;border-left:1px dotted #9fb0d0"></div>
<div class="abs" style="left:911px;top:608px;width:0;height:104px;border-left:1px dotted #9fb0d0"></div>
<div class="abs" style="left:708px;top:632px;width:281px;height:0;border-top:1px dotted #9fb0d0"></div>
<div class="abs" style="left:708px;top:659px;width:281px;height:0;border-top:1px dotted #9fb0d0"></div>
<div class="abs" style="left:708px;top:685px;width:281px;height:0;border-top:1px dotted #9fb0d0"></div>
<div class="pt serif" id="td" style="left:801px;top:580.400px;font-size:15.500px;font-weight:bold;color:#2f3d68;-webkit-text-stroke:.35px #2f3d68">Text description</div>
<div class="pt serif" id="tdr" style="left:673px;top:660px;font-size:15.500px;font-weight:bold;color:#2f3d68;-webkit-text-stroke:.35px #2f3d68;line-height:17px;text-align:center;transform:translate(-50%,-50%) rotate(-90deg);white-space:normal;width:100px">Text description</div>
<div class="cell arial" style="left:725px;top:617px">Parameter 1</div>
<div class="cell arial" style="left:725px;top:640px">Parameter 2</div>
<div class="cell arial" style="left:725px;top:666px">Parameter 3</div>
<div class="cell arial" style="left:725px;top:693px">Parameter 4</div>
<div class="num arial" style="left:852px;top:615px">45</div>
<div class="num arial" style="left:852px;top:638px">70</div>
<div class="num arial" style="left:852px;top:665px;color:#b4472b"><span style="text-decoration:underline">15</span><span style="text-decoration:line-through">5</span></div>
<div class="num arial" style="left:852px;top:691px">35</div>
<div class="num arial" style="left:935px;top:615px">5</div>
<div class="num arial" style="left:935px;top:638px">10</div>
<div class="num arial" style="left:935px;top:665px">5</div>
<div class="num arial" style="left:935px;top:691px">5-</div>
<svg style="left:696px;top:597px" width="12" height="12" viewBox="0 0 12 12" fill="none"><rect x=".5" y=".5" width="11" height="11" fill="#fff" stroke="#b0b0b0"/><path d="M6 2.500v7M2.500 6h7" stroke="#444" stroke-width="1"/></svg>
<div class="abs" style="left:988px;top:711px;width:8px;height:7px;border:1px solid #9aa;background:rgba(255,255,255,.2)"></div>
<!-- chart -->
<div class="abs" style="left:637px;top:729px;width:366px;height:80px;background:#fff"></div>
<div class="pt arial" id="yc" style="left:777px;top:740.300px;font-size:13.500px;font-weight:bold;color:#f6862a;letter-spacing:-.2px;-webkit-text-stroke:.4px #f6862a">YOUR CHART</div>
<div class="abs" style="left:807px;top:763px;width:25px;height:20px;border:2px solid #2c3140;background:#fff;color:#c0504d;font-size:13px;line-height:19px;text-align:center;letter-spacing:.5px">35</div>
<div class="abs" style="left:913px;top:768px;width:26px;height:20px;border:2px solid #1f6777;background:#fff;color:#c0504d;font-size:13px;line-height:19px;text-align:center;letter-spacing:.5px">45</div>
</div></div>
<div id="vsb"></div>
<!--RIGHTPANEL-->
<div id="rp"></div>
<div class="t" style="left:1295px;top:132px;font-weight:bold">Line spacing</div><div class="inp" style="left:1295px;top:145.5px;width:85px;height:22px;text-align:left"><span class="t" style="left:3px;top:4px;color:#666">Multiple</span></div><svg style="left:1368.5px;top:155.0px" width="7" height="5" viewBox="0 0 7 5" fill="none" stroke="#444" stroke-width="1"><path d="M.8 .8l2.700 2.700 2.700-2.700"/></svg><div class="inp" style="left:1392.5px;top:145.5px;width:84.5px;height:22px"><span class="t" style="right:17px;top:4px">1.15</span></div><svg style="left:1465.0px;top:148.5px" width="7" height="5" viewBox="0 0 7 5" fill="none" stroke="#444" stroke-width="1"><path d="M.8 4.200l2.700-2.700 2.700 2.700"/></svg><svg style="left:1465.0px;top:159.5px" width="7" height="5" viewBox="0 0 7 5" fill="none" stroke="#444" stroke-width="1"><path d="M.8 .8l2.700 2.700 2.700-2.700"/></svg><div class="t" style="left:1295px;top:178px;font-weight:bold">Paragraph spacing</div><div class="t" style="left:1295px;top:193px">Before</div><div class="t" style="left:1392.500px;top:193px">After</div><div class="inp" style="left:1295px;top:207px;width:85px;height:22px"><span class="t" style="right:17px;top:4px">0 cm</span></div><svg style="left:1368.0px;top:210.0px" width="7" height="5" viewBox="0 0 7 5" fill="none" stroke="#444" stroke-width="1"><path d="M.8 4.200l2.700-2.700 2.700 2.700"/></svg><svg style="left:1368.0px;top:221.0px" width="7" height="5" viewBox="0 0 7 5" fill="none" stroke="#444" stroke-width="1"><path d="M.8 .8l2.700 2.700 2.700-2.700"/></svg><div class="inp" style="left:1392.5px;top:207px;width:84.5px;height:22px"><span class="t" style="right:17px;top:4px">0.35 cm</span></div><svg style="left:1465.0px;top:210.0px" width="7" height="5" viewBox="0 0 7 5" fill="none" stroke="#444" stroke-width="1"><path d="M.8 4.200l2.700-2.700 2.700 2.700"/></svg><svg style="left:1465.0px;top:221.0px" width="7" height="5" viewBox="0 0 7 5" fill="none" stroke="#444" stroke-width="1"><path d="M.8 .8l2.700 2.700 2.700-2.700"/></svg><div class="abs" style="left:1295.500px;top:237px;width:13px;height:13px;background:#fff;border:1px solid #cfcfcf;border-radius:2px"></div><div class="t" style="left:1317px;top:238.700px">Don't add interval between</div><div class="t" style="left:1317px;top:255.400px">paragraphs of the same style</div><div class="abs" style="left:1295px;top:276px;width:195px;height:1px;background:#dcdcdc"></div><div class="t" style="left:1295px;top:287.500px;font-weight:bold">Indents</div><div class="t" style="left:1295px;top:303px">Left</div><div class="t" style="left:1392.500px;top:303px">Right</div><div class="inp" style="left:1295px;top:317.5px;width:85px;height:22px"><span class="t" style="right:17px;top:4px">0 cm</span></div><svg style="left:1368.0px;top:320.5px" width="7" height="5" viewBox="0 0 7 5" fill="none" stroke="#444" stroke-width="1"><path d="M.8 4.200l2.700-2.700 2.700 2.700"/></svg><svg style="left:1368.0px;top:331.5px" width="7" height="5" viewBox="0 0 7 5" fill="none" stroke="#444" stroke-width="1"><path d="M.8 .8l2.700 2.700 2.700-2.700"/></svg><div class="inp" style="left:1392.5px;top:317.5px;width:84.5px;height:22px"><span class="t" style="right:17px;top:4px">0 cm</span></div><svg style="left:1465.0px;top:320.5px" width="7" height="5" viewBox="0 0 7 5" fill="none" stroke="#444" stroke-width="1"><path d="M.8 4.200l2.700-2.700 2.700 2.700"/></svg><svg style="left:1465.0px;top:331.5px" width="7" height="5" viewBox="0 0 7 5" fill="none" stroke="#444" stroke-width="1"><path d="M.8 .8l2.700 2.700 2.700-2.700"/></svg><div class="t" style="left:1295px;top:348.500px">Special</div><div class="inp" style="left:1295px;top:363.5px;width:85px;height:22px;text-align:left"><span class="t" style="left:3px;top:4px;color:#666">(none)</span></div><svg style="left:1368.5px;top:373.0px" width="7" height="5" viewBox="0 0 7 5" fill="none" stroke="#444" stroke-width="1"><path d="M.8 .8l2.700 2.700 2.700-2.700"/></svg><div class="inp" style="left:1392.5px;top:363.5px;width:84.5px;height:22px"><span class="t" style="right:17px;top:4px">0 cm</span></div><svg style="left:1465.0px;top:366.5px" width="7" height="5" viewBox="0 0 7 5" fill="none" stroke="#444" stroke-width="1"><path d="M.8 4.200l2.700-2.700 2.700 2.700"/></svg><svg style="left:1465.0px;top:377.5px" width="7" height="5" viewBox="0 0 7 5" fill="none" stroke="#444" stroke-width="1"><path d="M.8 .8l2.700 2.700 2.700-2.700"/></svg><div class="abs" style="left:1295px;top:392.500px;width:195px;height:1px;background:#dcdcdc"></div><div class="abs" style="left:1295px;top:401.500px;width:45px;height:22px;background:#fff;border:1px solid #cfcfcf;border-radius:2px"></div><svg style="left:1296.500px;top:403.500px" width="32" height="18" viewBox="0 0 32 18"><rect x=".5" y=".5" width="31" height="17" fill="#fff" stroke="#e0e0e0"/><path d="M1 17.500L31 .5" stroke="#ff3030" stroke-width="1.200"/></svg><svg style="left:1329.5px;top:410.5px" width="7" height="5" viewBox="0 0 7 5" fill="none" stroke="#444" stroke-width="1"><path d="M.8 .8l2.700 2.700 2.700-2.700"/></svg><div class="t" style="left:1345.500px;top:407.300px">Background color</div><div class="abs" style="left:1295px;top:432px;width:195px;height:1px;background:#dcdcdc"></div><div class="t" style="left:1333px;top:443.300px;border-bottom:1px dotted #666;padding-bottom:2px">Show advanced settings</div><div class="abs" style="left:1266px;top:138px;width:11px;height:333px;background:#f7f7f7;border:1px solid #e0e0e0;border-radius:2px"></div><div class="abs" style="left:1266px;top:124px;width:11px;height:13px;background:#f7f7f7;border:1px solid #dcdcdc;border-radius:2px"></div><svg style="left:1268px;top:128px" width="7" height="5" viewBox="0 0 7 5"><path d="M.5 4.200l3-3.200 3 3.200z" fill="#adadad"/></svg><div class="abs" style="left:1266px;top:760px;width:11px;height:12px;background:#f7f7f7;border:1px solid #dcdcdc;border-radius:2px"></div><svg style="left:1268px;top:764px" width="7" height="5" viewBox="0 0 7 5"><path d="M.5 .8l3 3.200 3-3.200z" fill="#adadad"/></svg><svg style="left:1269px;top:297px" width="4" height="10" viewBox="0 0 4 10" fill="#c0c0c0"><rect x="0" y="0" width="4" height="1"/><rect x="0" y="2" width="4" height="1"/><rect x="0" y="4" width="4" height="1"/><rect x="0" y="6" width="4" height="1"/><rect x="0" y="8" width="4" height="1"/></svg>
<div id="rt"></div>
<div class="abs" style="left:1500px;top:137.500px;width:36px;height:30px;background:#cbcbcb"></div><div class="t" style="left:1515px;top:144px;font-size:15px;font-weight:bold;color:#111">¶</div><svg style="left:1510px;top:180.5px" width="20" height="20" viewBox="0 0 20 20" fill="none" stroke="#444" stroke-width="1" opacity=".5"><rect x="2.500" y="4.500" width="15" height="11"/><path d="M2.500 8.500h15M2.500 12h15M7.500 4.500v11M12.500 4.500v11"/></svg><svg style="left:1510px;top:218.5px" width="20" height="20" viewBox="0 0 20 20" fill="none" stroke="#444" stroke-width="1" opacity=".5"><rect x="3.500" y="3.500" width="13" height="13"/><path d="M3.500 13.500l4-4 3 3 2-2 4 4"/><circle cx="7" cy="7" r="1.200"/></svg><svg style="left:1510px;top:256.5px" width="20" height="20" viewBox="0 0 20 20" fill="none" stroke="#444" stroke-width="1" opacity=".5"><rect x="4.500" y="2.500" width="11" height="15" rx="1"/><path d="M4.500 14.500h11" stroke-width="2"/></svg><svg style="left:1510px;top:294.5px" width="20" height="20" viewBox="0 0 20 20" fill="none" stroke="#444" stroke-width="1" opacity=".5"><path d="M3.500 3.500h9v4"/><path d="M3.500 3.500v9h3"/><circle cx="11.500" cy="11.500" r="5"/></svg><svg style="left:1510px;top:332.5px" width="20" height="20" viewBox="0 0 20 20" fill="none" stroke="#444" stroke-width="1" opacity=".5"><rect x="3.500" y="12.500" width="3" height="4"/><rect x="8.500" y="9.500" width="3" height="7"/><rect x="13.500" y="4.500" width="3" height="12"/></svg><div class="t" style="left:1513.5px;top:372px;font-size:13px;color:#444;opacity:.5">Ta</div><svg style="left:1513.5px;top:386px" width="14" height="5" viewBox="0 0 14 5" fill="none" stroke="#444" opacity=".5"><path d="M1 4c3-4 9-4 12 0"/></svg><svg style="left:1510px;top:408.5px" width="20" height="20" viewBox="0 0 20 20" fill="none" stroke="#444" stroke-width="1" opacity=".5"><path d="M5.500 3c2.500 2 2.500 8.500.5 11.500s-3.500.5-1.500-3M3 9.500l5.500 1.500"/><path d="M9.500 17l1-3.500 5.500-8 1.500 1-5.500 8z" fill="#444"/></svg>
<!--STATUS-->
<div id="sb"></div>
<div class="t" style="left:39px;top:783px;font-weight:bold">Page 1 of 1</div><div class="abs" style="left:104px;top:776px;width:1px;height:20px;background:#dcdcdc"></div><svg style="left:114px;top:779px" width="14" height="16" viewBox="0 0 14 16" fill="none" stroke="#444" stroke-width="1"><path d="M1 1.500h12M3 4.500h10M1 7.500h9"/><text x="0.500" y="15" font-size="6.500" font-family="Liberation Sans,sans-serif" fill="#444" stroke="none">123</text></svg><div class="t" style="left:135px;top:783px;font-weight:bold">Word count</div><div class="abs" style="left:1040px;top:776px;width:1px;height:20px;background:#dcdcdc"></div><div class="abs" style="left:1252px;top:776px;width:1px;height:20px;background:#e0e0e0"></div><div class="abs" style="left:1301px;top:776px;width:1px;height:20px;background:#e0e0e0"></div><div class="t" style="left:1053px;top:783px;font-weight:bold">English (United States)</div><svg style="left:1178.5px;top:785.5px" width="7" height="5" viewBox="0 0 7 5" fill="none" stroke="#444" stroke-width="1"><path d="M.8 .8l2.700 2.700 2.700-2.700"/></svg><svg style="left:1192px;top:778px" width="19" height="19" viewBox="0 0 19 19" fill="none" stroke="#444" stroke-width="1"><circle cx="9.500" cy="9.500" r="7"/><ellipse cx="9.500" cy="9.500" rx="3" ry="7"/><path d="M9.500 2.500v14M2.500 9.500h14M3.500 6h12M3.500 13h12"/></svg><svg style="left:1223px;top:778px" width="20" height="19" viewBox="0 0 20 19" fill="none" stroke="#444" stroke-width="1"><text x="1" y="9" font-size="7" font-family="Liberation Sans,sans-serif" fill="#444" stroke="none">ABC</text><path d="M8 13l2.500 2.500 5-6"/></svg><svg style="left:1260px;top:778px" width="20" height="19" viewBox="0 0 20 19" fill="none" stroke="#444" stroke-width="1"><path d="M2 4.500h5M2 8.500h5M2 12.500h4"/><path d="M9 3l1.500 1.500 2.500-2.500M14 2l3 3M17 2l-3 3"/><path d="M8.500 16.500l1-3.500 6-6 2 2-6 6z"/></svg><svg style="left:1282.5px;top:786px" width="7" height="5" viewBox="0 0 7 5" fill="none" stroke="#444" stroke-width="1"><path d="M.8 .8l2.700 2.700 2.700-2.700"/></svg><svg style="left:1311px;top:778px" width="19" height="19" viewBox="0 0 19 19" fill="none" stroke="#444" stroke-width="1"><rect x="3.500" y="2.500" width="12" height="15"/><path d="M7.500 5l2-2 2 2M7.500 15l2 2 2-2M6 8l-2 2 2 2M13 8l2 2-2 2" stroke-width=".9"/></svg><svg style="left:1342px;top:778px" width="19" height="19" viewBox="0 0 19 19" fill="none" stroke="#444" stroke-width="1"><path d="M1.500 4v12M17.500 4v12M3 10h13M6 7l-3 3 3 3M13 7l3 3-3 3"/></svg><div class="abs" style="left:1377px;top:787px;width:12px;height:1px;background:#444"></div><div class="t" style="left:1405.500px;top:783px;font-weight:bold">Zoom 100%</div><div class="abs" style="left:1484px;top:787px;width:11px;height:1px;background:#444"></div><div class="abs" style="left:1489px;top:782px;width:1px;height:11px;background:#444"></div>
</body>
</html>
